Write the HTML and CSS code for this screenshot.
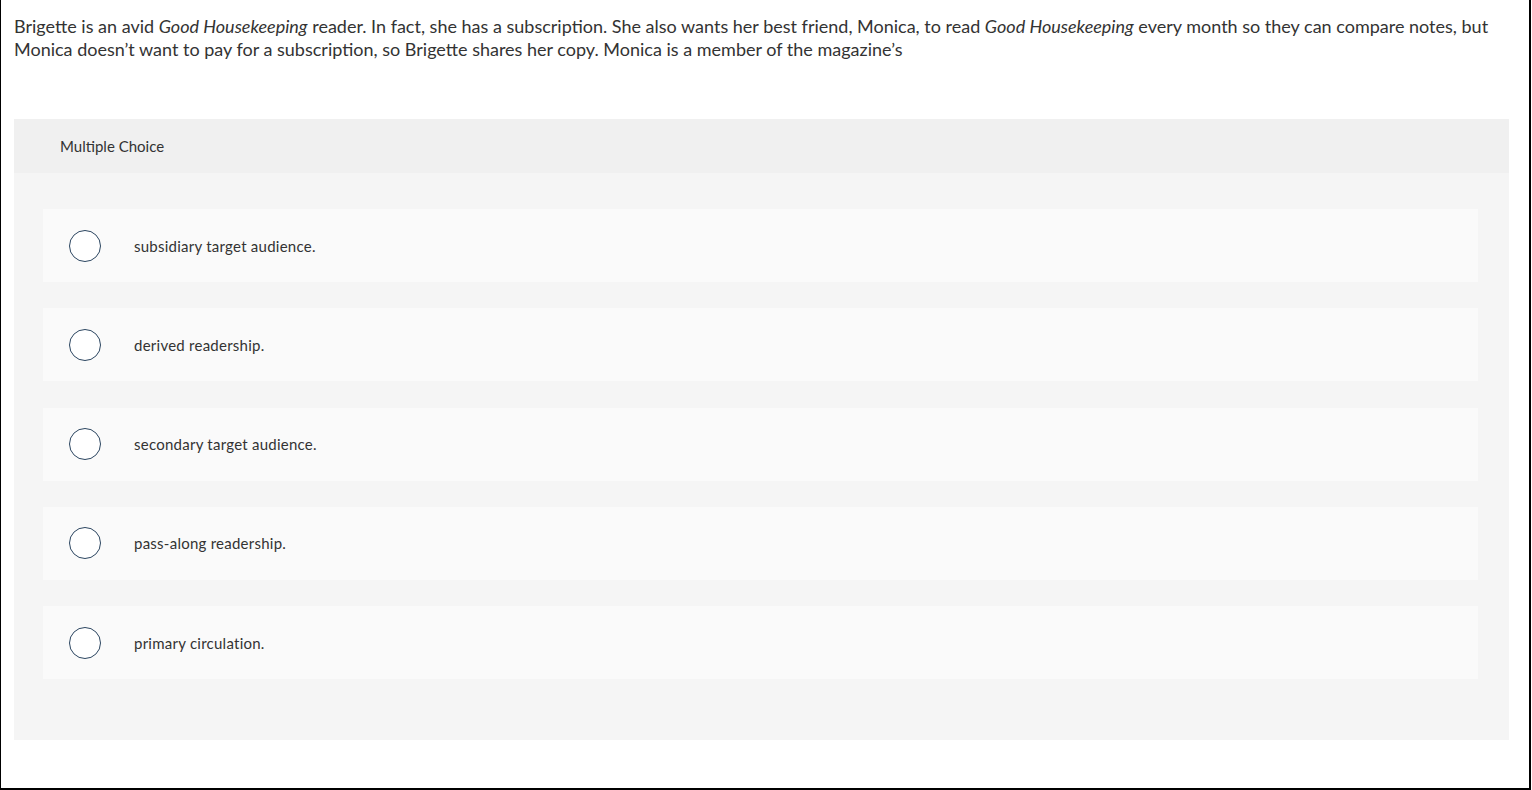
FILE: index.html
```html
<!DOCTYPE html>
<html>
<head>
<meta charset="utf-8">
<link rel="stylesheet" href="styles.css">
</head>
<body>
<div class="frame">
  <p class="prompt">Brigette is an avid <em>Good Housekeeping</em> reader. In fact, she has a subscription. She also wants her best friend, Monica, to read <em>Good Housekeeping</em> every month so they can compare notes, but Monica doesn’t want to pay for a subscription, so Brigette shares her copy. Monica is a member of the magazine’s</p>
  <section class="question">
    <div class="qhead">Multiple Choice</div>
    <div class="choices">
      <label class="choice"><span class="radio"></span><span class="ctext">subsidiary target audience.</span></label>
      <label class="choice"><span class="radio"></span><span class="ctext">derived readership.</span></label>
      <label class="choice"><span class="radio"></span><span class="ctext">secondary target audience.</span></label>
      <label class="choice"><span class="radio"></span><span class="ctext">pass-along readership.</span></label>
      <label class="choice"><span class="radio"></span><span class="ctext">primary circulation.</span></label>
    </div>
  </section>
</div>
</body>
</html>
```

FILE: styles.css
```css
html, body {
  margin: 0;
  padding: 0;
  background: #fff;
}
body {
  font-family: Lato, "Open Sans", "Liberation Sans", sans-serif;
  color: #333;
}
.frame {
  box-sizing: border-box;
  width: 1531px;
  height: 790px;
  border-left: 1px solid #000;
  border-right: 2px solid #000;
  border-bottom: 2px solid #000;
  padding: 0 20px 0 13px;
}
.prompt {
  margin: 0;
  padding-top: 15px;
  font-size: 18px;
  line-height: 23px;
  color: #333;
  height: 104px;
}
.prompt em {
  font-style: italic;
}
.question {
  width: 1495px;
  background: #f5f5f5;
  padding-bottom: 61px;
}
.qhead {
  height: 54px;
  background: #f0f0f0;
  display: flex;
  align-items: center;
  padding-left: 46px;
  font-size: 15px;
  color: #333;
}
.choices {
  display: flex;
  flex-direction: column;
  gap: 26.25px;
  padding: 36px 31px 0 29px;
}
.choice {
  height: 73px;
  background: #fafafa;
  display: flex;
  align-items: center;
  padding-left: 26px;
}
.radio {
  box-sizing: border-box;
  width: 32px;
  height: 32px;
  border: 1.5px solid #2b4560;
  border-radius: 50%;
  background: #fff;
  flex: none;
}
.ctext {
  margin-left: 33px;
  font-size: 15px;
  letter-spacing: 0.25px;
  color: #333;
}
```
